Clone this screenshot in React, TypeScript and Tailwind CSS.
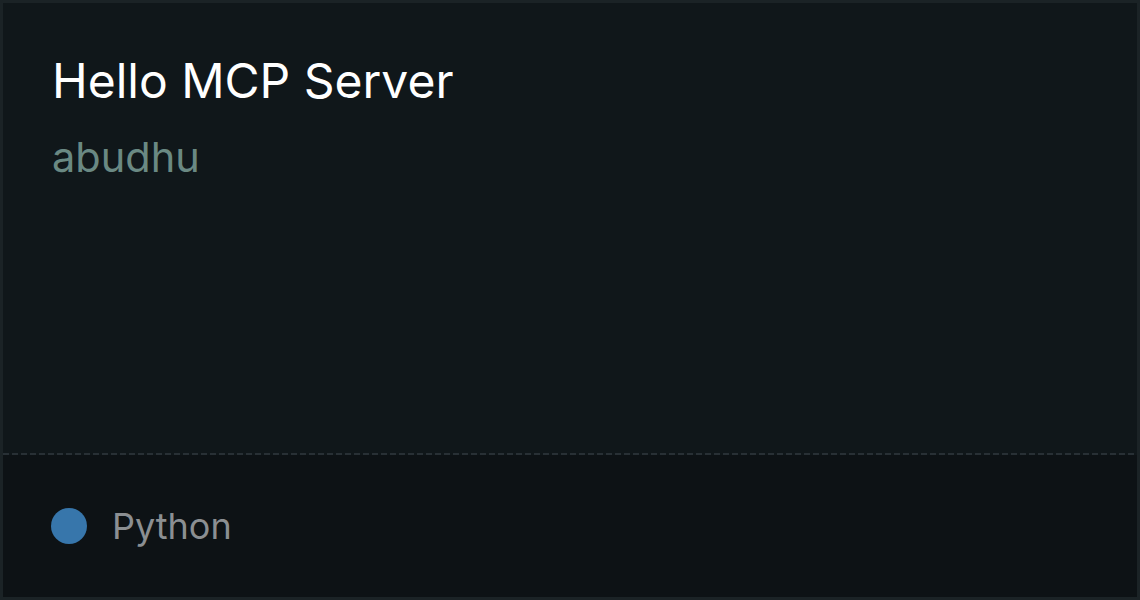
export default function App() {
  return (
    <div className="w-[1140px] h-[600px] bg-[#1b2326] p-[3px] font-['Inter',sans-serif]">
      <div className="flex h-full flex-col bg-[#10171a]">
        {/* Header */}
        <div className="flex-1 px-[49px] pt-[50px]">
          <h1 className="text-[48px] leading-[56px] font-normal text-white">Hello MCP Server</h1>
          <p className="mt-[24px] text-[41.5px] leading-[48px] text-[#6a8983]">abudhu</p>
        </div>

        <div className="h-[2px] bg-[repeating-linear-gradient(to_right,#283035_0px,#283035_6px,transparent_6px,transparent_9px)]" />

        {/* Footer */}
        <div className="flex h-[142px] items-center gap-[25px] bg-[#0d1215] px-[48px]">
          <span className="h-[36px] w-[36px] rounded-full bg-[#3776ab]" />
          <span className="text-[36px] leading-[44px] text-[#8b8f92]">Python</span>
        </div>
      </div>
    </div>
  )
}
